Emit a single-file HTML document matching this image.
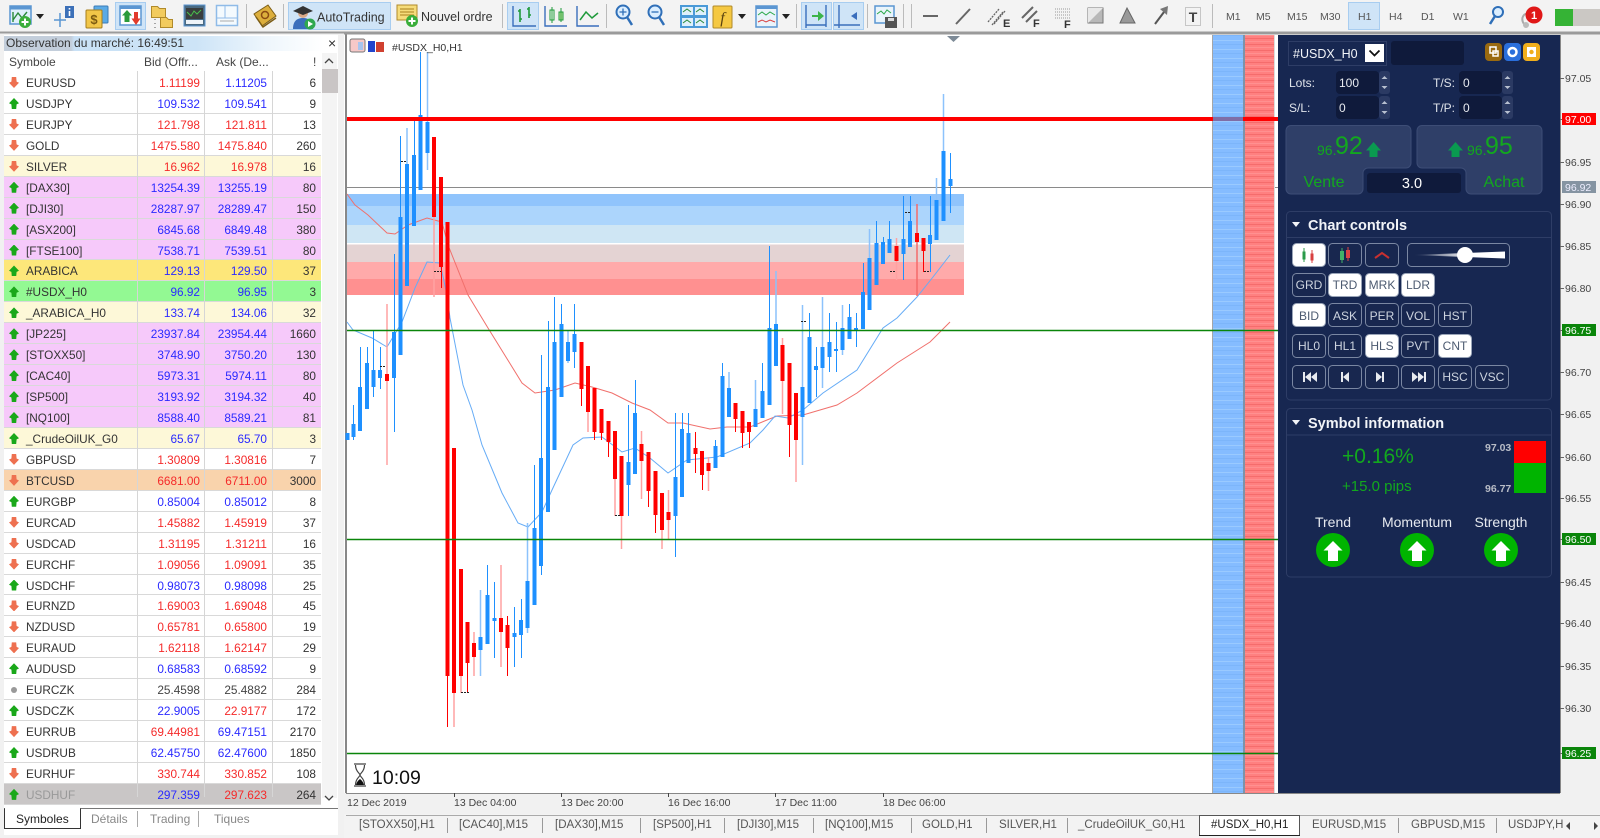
<!DOCTYPE html>
<html><head><meta charset="utf-8"><title>MT4</title>
<style>
html,body{margin:0;padding:0;background:#f1f1f1;width:1600px;height:838px;overflow:hidden;font-family:"Liberation Sans",sans-serif}
svg{position:absolute;left:0;top:0;font-family:"Liberation Sans",sans-serif}
#lp{position:absolute;left:4px;top:35px;width:334px;height:800px;background:#fff}
#ttl{position:absolute;left:4px;top:36px;width:320px;height:15px;background:linear-gradient(90deg,#c3cedb 0,#c3cedb 21%,#c9e1f6 22%,#cde4f7 60%,#eef6fc 82%,#fff 100%);font-size:12px;line-height:15px;color:#333;padding-left:2px;box-sizing:border-box}
#x{position:absolute;left:328px;top:36px;font-size:14px;line-height:15px;color:#333}
.h{position:absolute;top:55px;font-size:12px;line-height:14px;color:#444}
#rows{position:absolute;left:4px;top:72px;width:317px}
.r{position:relative;height:20.95px;border-bottom:1px solid #d9d9d9;box-sizing:border-box;font-size:11.8px;line-height:23px;color:#333;overflow:hidden}
.r i{position:absolute;left:5px;top:5px;width:10px;height:11px}
.r i.u{background:#1aa81a;clip-path:polygon(50% 0,100% 48%,76% 58%,72% 100%,28% 100%,24% 58%,0 48%)}
.r i.d{background:#ee7050;clip-path:polygon(28% 0,72% 0,76% 42%,100% 52%,50% 100%,0 52%,24% 42%)}
.r i.n{background:#999;border-radius:50%;width:6px;height:6px;top:8px;left:7px}
.r span{position:absolute;left:22px}
.r b,.r u{position:absolute;font-weight:normal;text-decoration:none}
.r b.a{right:121px}.r b.c{right:54px}.r u{right:5px}
.bl{color:#2a2aff}.re{color:#f52a2a}.bk{color:#444}
.v{position:absolute;top:71px;width:1px;height:726px;background:#d6d6d6}
.bt{position:absolute;top:812px;font-size:12px;line-height:14px;color:#888}
.tb{position:absolute;top:818px;font-size:11.5px;line-height:14px;color:#555;white-space:nowrap}
.sp{position:absolute;top:818px;width:1px;height:15px;background:#999}
.pa{fill:#444;font-size:10.5px}
.tm{fill:#444;font-size:10.5px}
.tt{fill:#555;font-size:10.5px}
.bd{fill:#18274f;stroke:#7a87a2;stroke-width:1}
.bw{fill:#fff;stroke:#9aa5b8;stroke-width:1}
.btx{font-size:12px;text-anchor:middle;fill:#cdd4df}
.btd{font-size:12px;text-anchor:middle;fill:#4c5a70}
.ipt{fill:#0f1a3b}
.spn{fill:#2b3a63}
.lb{font-size:12px;fill:#dfe3ea}
.val{font-size:12px;fill:#e8ebf0}
.sec{fill:none;stroke:#2e3d66;stroke-width:1}
.hd{font-size:14.5px;font-weight:bold;fill:#f2f4f8}
.gr{fill:#12a81e}
.ind{font-size:14px;fill:#e6e9ef;text-anchor:middle}
</style></head><body>

<div id="lp"></div>
<div id="ttl">Observation du marché: 16:49:51</div>
<div id="x">×</div>
<div class="h" style="left:9px">Symbole</div>
<div class="h" style="left:144px">Bid (Offr...</div>
<div class="h" style="left:216px">Ask (De...</div>
<div class="h" style="left:313px">!</div>

<div id="rows">
<div class="r"><i class="d"></i><span>EURUSD</span><b class="a re">1.11199</b><b class="c bl">1.11205</b><u>6</u></div>
<div class="r"><i class="u"></i><span>USDJPY</span><b class="a bl">109.532</b><b class="c bl">109.541</b><u>9</u></div>
<div class="r"><i class="d"></i><span>EURJPY</span><b class="a re">121.798</b><b class="c re">121.811</b><u>13</u></div>
<div class="r"><i class="d"></i><span>GOLD</span><b class="a re">1475.580</b><b class="c re">1475.840</b><u>260</u></div>
<div class="r" style="background:#fdf8d8"><i class="d"></i><span>SILVER</span><b class="a re">16.962</b><b class="c re">16.978</b><u>16</u></div>
<div class="r" style="background:#f6c9fa"><i class="u"></i><span>[DAX30]</span><b class="a bl">13254.39</b><b class="c bl">13255.19</b><u>80</u></div>
<div class="r" style="background:#f6c9fa"><i class="u"></i><span>[DJI30]</span><b class="a bl">28287.97</b><b class="c bl">28289.47</b><u>150</u></div>
<div class="r" style="background:#f6c9fa"><i class="u"></i><span>[ASX200]</span><b class="a bl">6845.68</b><b class="c bl">6849.48</b><u>380</u></div>
<div class="r" style="background:#f6c9fa"><i class="u"></i><span>[FTSE100]</span><b class="a bl">7538.71</b><b class="c bl">7539.51</b><u>80</u></div>
<div class="r" style="background:#fde77a"><i class="u"></i><span>ARABICA</span><b class="a bl">129.13</b><b class="c bl">129.50</b><u>37</u></div>
<div class="r" style="background:#93f993"><i class="u"></i><span>#USDX_H0</span><b class="a bl">96.92</b><b class="c bl">96.95</b><u>3</u></div>
<div class="r" style="background:#fdf8d8"><i class="u"></i><span>_ARABICA_H0</span><b class="a bl">133.74</b><b class="c bl">134.06</b><u>32</u></div>
<div class="r" style="background:#f6c9fa"><i class="u"></i><span>[JP225]</span><b class="a bl">23937.84</b><b class="c bl">23954.44</b><u>1660</u></div>
<div class="r" style="background:#f6c9fa"><i class="u"></i><span>[STOXX50]</span><b class="a bl">3748.90</b><b class="c bl">3750.20</b><u>130</u></div>
<div class="r" style="background:#f6c9fa"><i class="u"></i><span>[CAC40]</span><b class="a bl">5973.31</b><b class="c bl">5974.11</b><u>80</u></div>
<div class="r" style="background:#f6c9fa"><i class="u"></i><span>[SP500]</span><b class="a bl">3193.92</b><b class="c bl">3194.32</b><u>40</u></div>
<div class="r" style="background:#f6c9fa"><i class="u"></i><span>[NQ100]</span><b class="a bl">8588.40</b><b class="c bl">8589.21</b><u>81</u></div>
<div class="r" style="background:#fdf8d8"><i class="u"></i><span>_CrudeOilUK_G0</span><b class="a bl">65.67</b><b class="c bl">65.70</b><u>3</u></div>
<div class="r"><i class="d"></i><span>GBPUSD</span><b class="a re">1.30809</b><b class="c re">1.30816</b><u>7</u></div>
<div class="r" style="background:#f9d3ac"><i class="d"></i><span>BTCUSD</span><b class="a re">6681.00</b><b class="c re">6711.00</b><u>3000</u></div>
<div class="r"><i class="u"></i><span>EURGBP</span><b class="a bl">0.85004</b><b class="c bl">0.85012</b><u>8</u></div>
<div class="r"><i class="d"></i><span>EURCAD</span><b class="a re">1.45882</b><b class="c re">1.45919</b><u>37</u></div>
<div class="r"><i class="d"></i><span>USDCAD</span><b class="a re">1.31195</b><b class="c re">1.31211</b><u>16</u></div>
<div class="r"><i class="d"></i><span>EURCHF</span><b class="a re">1.09056</b><b class="c re">1.09091</b><u>35</u></div>
<div class="r"><i class="u"></i><span>USDCHF</span><b class="a bl">0.98073</b><b class="c bl">0.98098</b><u>25</u></div>
<div class="r"><i class="d"></i><span>EURNZD</span><b class="a re">1.69003</b><b class="c re">1.69048</b><u>45</u></div>
<div class="r"><i class="d"></i><span>NZDUSD</span><b class="a re">0.65781</b><b class="c re">0.65800</b><u>19</u></div>
<div class="r"><i class="d"></i><span>EURAUD</span><b class="a re">1.62118</b><b class="c re">1.62147</b><u>29</u></div>
<div class="r"><i class="u"></i><span>AUDUSD</span><b class="a bl">0.68583</b><b class="c bl">0.68592</b><u>9</u></div>
<div class="r"><i class="n"></i><span>EURCZK</span><b class="a bk">25.4598</b><b class="c bk">25.4882</b><u>284</u></div>
<div class="r"><i class="u"></i><span>USDCZK</span><b class="a bl">22.9005</b><b class="c re">22.9177</b><u>172</u></div>
<div class="r"><i class="d"></i><span>EURRUB</span><b class="a re">69.44981</b><b class="c bl">69.47151</b><u>2170</u></div>
<div class="r"><i class="u"></i><span>USDRUB</span><b class="a bl">62.45750</b><b class="c bl">62.47600</b><u>1850</u></div>
<div class="r"><i class="d"></i><span>EURHUF</span><b class="a re">330.744</b><b class="c re">330.852</b><u>108</u></div>
<div class="r" style="background:#c9c6c6"><i class="u"></i><span style="color:#999">USDHUF</span><b class="a bl">297.359</b><b class="c re">297.623</b><u>264</u></div>
</div>
<div class="v" style="left:137px"></div><div class="v" style="left:204px"></div><div class="v" style="left:272px"></div>

<div class="bt" style="left:91px">Détails</div>
<div class="bt" style="left:150px">Trading</div>
<div class="bt" style="left:214px">Tiques</div>

<svg width="1600" height="838" viewBox="0 0 1600 838" xmlns="http://www.w3.org/2000/svg">
<!-- left panel chrome -->
<rect x="322" y="53" width="15" height="745" fill="#f4f4f4"/>
<rect x="322" y="69" width="16" height="24" fill="#c9c5c5"/>
<path d="M325 63l4-4 4 4M325 796l4 4 4-4" fill="none" stroke="#444" stroke-width="1.300"/>
<path d="M4 808.500H338" stroke="#777"/>
<path d="M137.500 811V827M198.500 811V827" stroke="#aaa"/>
<path d="M4.500 808.500V828.500H80.500V808.500" fill="#fff" stroke="#333"/>
<path d="M5 809H80" stroke="#fff" stroke-width="2"/>
<text x="16" y="823" font-size="12" fill="#222">Symboles</text>

<!-- chart area -->
<rect x="344" y="34" width="1216" height="759" fill="#fff"/>
<path d="M346 34V793" stroke="#888" stroke-width="2"/>
<path d="M344 34H1600" stroke="#999" stroke-width="1"/>
<path d="M346 793.500H1560" stroke="#888"/>
<!-- zones -->
<rect x="347" y="194" width="617" height="12" fill="#90c4fc"/>
<rect x="347" y="206" width="617" height="19" fill="#acd5fc"/>
<rect x="347" y="225" width="617" height="18" fill="#cfe6f4"/>
<rect x="347" y="244.500" width="617" height="17.500" fill="#e4d3d3"/>
<rect x="347" y="262" width="617" height="17" fill="#ffaaaa"/>
<rect x="347" y="279" width="617" height="16" fill="#ff9090"/>
<!-- horizontal -->
<path d="M347 187.500H1278" stroke="#8a8a8a"/>
<!-- indicators -->
<path fill="none" stroke="#f0706c" stroke-width="1" d="M347 194L355 205L368 215L387 233L395 234L408 225L427 218L442 222L448 245L468 295L488 328L522 383L535 393L555 390L575 383L592 387L612 393L632 403L650 410L668 423L683 423L710 429L727 427L750 427L767 420L777 416L803 415L837 405L857 393L897 363L930 342L950 322"/>
<path fill="none" stroke="#66acf6" stroke-width="1" d="M347 322L353 330L372 338L387 347L402 322L415 288L427 262L440 263L447 295L450 318L463 385L472 410L482 445L502 493L518 523L528 527L542 512L552 490L573 445L583 438L602 437L622 452L635 448L650 458L668 473L687 460L717 457L750 443L763 430L775 416L788 418L803 410L823 393L857 370L883 328L897 318L917 297L933 277L950 255"/>
<!-- wicks -->
<path fill="none" stroke="#1e90ff" stroke-width="1" d="M353.500 405V440M360.500 347V431M367.500 347V409M373.500 330V397M380.500 347V389M394.500 254V432M400.500 136V355M414.500 121V226M420.500 52V190M487.500 565V644M494.500 582V658M514.500 607V667M521.500 599V658M534.500 465V605M541.500 355V575M548.500 321V512M554.500 297V450M561.500 304V397M574.500 304V368M628.500 405V516M635.500 380V474M675.500 413V557M682.500 413V497M688.500 413V463M715.500 440V468M722.500 363V457M762.500 363V418M769.500 246V405M809.500 313V403M816.500 347V397M829.500 313V372M836.500 322V372M849.500 304V339M856.500 313V347M863.500 263V329M876.500 221V285M883.500 237V264M889.500 221V253M903.500 196V280M910.500 196V247M930.500 196V272M950.500 153V213"/>
<path fill="none" stroke="#8cc2fc" stroke-width="1.500" d="M407 128V286M427.500 52V170M480.500 590V676M527.500 523V633M568 330V363M729 372V417M755.500 380V427M776 271V366M802.500 305V465M822.500 297V388M842.500 305V355M869.500 229V310M936.500 178V240M943.500 94V221"/>
<path fill="none" stroke="#f00" stroke-width="1" d="M441.500 177V288M447.500 222V727M467.500 622V693M507.500 616V676M581.500 342V406M594.500 388V440M601.500 409V440M608.500 421V457M648.500 452V507M655.500 471V533M695.500 432V473M702.500 451V490M735.500 403V432M742.500 411V448M749.500 422V448M789.500 363V457M923.500 238V272"/>
<path fill="none" stroke="#ffa2a2" stroke-width="1.500" d="M387 304V465M434 137V297M454 448V727M461 569V693M474 632V676M501 565V667M588 366V432M615 431V516M621.500 456V549M641.500 431V499M662 493V549M668.500 490V540M708.500 457V491M782.500 338V414M796 393V482M896.500 238V280"/>
<path fill="none" stroke="#f46a6a" stroke-width="1.500" d="M917 204V296"/>
<!-- bodies -->
<path fill="none" stroke="#1e90ff" stroke-width="4" d="M347.500 433V440M353.500 424V437M360 387V431M367 363V409M373.500 370V387M380 370V378M394 332V378M400.500 217V355M407 164V286M414 155V226M420.500 115V190M427.500 122V153M480.500 637V650M487.500 595V644M494.500 618V621M514.500 633V637M521 620V635M527.500 581V628M534.500 528V605M541 458V566M548 387V512M554.500 342V450M561.500 324V397M568 342V361M574.500 334V352M628.500 462V485M635 413V474M675.500 477V516M682 429V497M688.500 433V463M715.500 446V468M722.500 376V457M729 388V417M755.500 409V427M762.500 391V418M769.500 328V405M776 324V366M802.500 387V417M809.500 337V403M816 366V370M822.500 347V368M829.500 342V357M836 349V351M842.500 328V350M849.500 317V339M856 328V330M863 292V329M869.500 258V310M876.500 243V285M883 242V264M889.500 239V253M903.500 239V254M910 221V247M930 235V244M936.500 200V240M943.500 151V221M950.500 179V186"/>
<path fill="none" stroke="#f00" stroke-width="4" d="M387 374V381M434 137V217M441 177V267M447.500 222V676M454 448V693M461 569V676M467.500 622V663M474 643V657M501 618V632M507.500 625V648M581.500 342V389M588 366V412M594.500 388V432M601.500 409V433M608.500 421V442M615 431V479M621.500 456V516M641.500 444V461M648.500 452V491M655.500 471V515M662 493V530M668.500 512V520M695.500 448V454M702 451V475M708.500 463V471M735.500 403V419M742.500 411V433M749 422V432M782.500 345V381M789.500 363V425M796 393V440M896.500 246V261M917 233V242M923.500 238V251"/>
<!-- tiny dashes -->
<path fill="none" stroke="#222" stroke-width="1" stroke-dasharray="2 1" d="M401 161.500h6M434 271.500h7M380 366.500h6M461 692.500h8M615 515.500h5M662 539.500h6M801 321.500h6M905 212.500h5M924 271.500h6M890 271.500h6"/>
<!-- side bars -->
<defs>
<pattern id="pb" width="6" height="9" patternUnits="userSpaceOnUse"><rect width="6" height="9" fill="#85bcff"/><rect y="4" width="6" height="1" fill="#9acaff"/><rect y="8" width="6" height="1" fill="#7cb5fa"/></pattern>
<pattern id="pr" width="6" height="6" patternUnits="userSpaceOnUse"><rect width="6" height="6" fill="#ff8080"/><rect y="2" width="6" height="1" fill="#f56c6c"/><rect y="5" width="6" height="1" fill="#ff9090"/></pattern>
</defs>
<rect x="1213" y="35" width="30" height="758" fill="url(#pb)"/>
<rect x="1245" y="35" width="29" height="758" fill="url(#pr)"/>
<path d="M1212.500 35V793" stroke="#a6a6a6"/><path d="M1244 35V793" stroke="#7f93a8" stroke-width="2"/><path d="M1274.500 35V793" stroke="#ddd"/>
<!-- levels -->
<path d="M347 119H1278" stroke="#f00" stroke-width="4"/>
<rect x="1213" y="117" width="30" height="4" fill="#7f6ea6"/>
<path d="M347 330.500H1278M347 539.500H1278M347 753.500H1278" stroke="#0a850a" stroke-width="1.400"/>
<path d="M947 36h13l-6.500 6z" fill="#7d8a96"/>

<!-- chart label/icons -->
<rect x="350" y="39" width="15" height="13" rx="2" fill="#f6c8c8" stroke="#777"/>
<rect x="358" y="42" width="5" height="8" fill="#a8c4ee"/>
<rect x="368" y="41" width="7" height="11" fill="#2244cc"/>
<rect x="376" y="42" width="8" height="10" fill="#d04030"/>
<text x="392" y="51" font-size="10.500" fill="#333">#USDX_H0,H1</text>

<!-- hourglass -->
<path d="M354 764H366M354 786H366M355.500 765C355.500 772 360 773 360 775C360 777 355.500 778 355.500 785M364.500 765C364.500 772 360 773 360 775C360 777 364.500 778 364.500 785" fill="none" stroke="#444" stroke-width="1.200"/>
<path d="M356 785C357 781 359 780 360 779C361 780 363 781 364 785Z" fill="#111"/>
<text x="372" y="784" font-size="19.500" fill="#111">10:09</text>

<!-- time axis -->
<g stroke="#444"><path d="M454.500 793V797M561.500 793V797M668.500 793V797M775.500 793V797M883.500 793V797"/></g>
<text class="tm" x="347" y="806">12 Dec 2019</text><text class="tm" x="454" y="806">13 Dec 04:00</text><text class="tm" x="561" y="806">13 Dec 20:00</text><text class="tm" x="668" y="806">16 Dec 16:00</text><text class="tm" x="775" y="806">17 Dec 11:00</text><text class="tm" x="883" y="806">18 Dec 06:00</text>

<!-- price axis -->
<path d="M1560.500 35V793" stroke="#888"/>
<path stroke="#666" d="M1560 78.500h4M1560 119.500h4M1560 162.500h4M1560 204.500h4M1560 246.500h4M1560 288.500h4M1560 330.500h4M1560 372.500h4M1560 414.500h4M1560 457.500h4M1560 498.500h4M1560 539.500h4M1560 582.500h4M1560 623.500h4M1560 666.500h4M1560 708.500h4M1560 753.500h4"/>
<g class="pa">
<text class="pa" x="1565" y="82">97.05</text><text class="pa" x="1565" y="166">96.95</text><text class="pa" x="1565" y="208">96.90</text><text class="pa" x="1565" y="250">96.85</text><text class="pa" x="1565" y="292">96.80</text><text class="pa" x="1565" y="376">96.70</text><text class="pa" x="1565" y="418">96.65</text><text class="pa" x="1565" y="461">96.60</text><text class="pa" x="1565" y="502">96.55</text><text class="pa" x="1565" y="586">96.45</text><text class="pa" x="1565" y="627">96.40</text><text class="pa" x="1565" y="670">96.35</text><text class="pa" x="1565" y="712">96.30</text>
</g>
<rect x="1562" y="113" width="34" height="12" fill="#f00"/><text x="1565" y="123" font-size="10.500" fill="#fff">97.00</text>
<rect x="1562" y="181" width="34" height="12" fill="#8594a2"/><text x="1565" y="191" font-size="10.500" fill="#eef">96.92</text>
<rect x="1562" y="324" width="34" height="12" fill="#0a850a"/><text x="1565" y="334" font-size="10.500" fill="#fff">96.75</text>
<rect x="1562" y="533" width="34" height="12" fill="#0a850a"/><text x="1565" y="543" font-size="10.500" fill="#fff">96.50</text>
<rect x="1562" y="747" width="34" height="12" fill="#0a850a"/><text x="1565" y="757" font-size="10.500" fill="#fff">96.25</text>

<!-- PANEL -->
<rect x="1278" y="35" width="282" height="758" fill="#172751"/>
<rect x="1288.500" y="41.500" width="98" height="24" fill="none" stroke="#2e3d66"/>
<text x="1293" y="58" font-size="12.500" fill="#f2f4f8">#USDX_H0</text>
<rect x="1365" y="44" width="19" height="18" fill="#fff"/>
<path d="M1369.500 50.500l5 5 5-5" fill="none" stroke="#111" stroke-width="1.800"/>
<rect x="1391" y="41" width="73" height="24" rx="3" class="ipt"/>
<rect x="1485" y="43" width="17" height="18" rx="4" fill="#9a6a10"/><rect x="1490" y="47" width="6" height="6" fill="none" stroke="#fff" stroke-width="1.500"/><rect x="1493" y="51" width="5" height="5" fill="none" stroke="#fff" stroke-width="1.500"/>
<rect x="1504" y="43" width="17" height="18" rx="4" fill="#2a6fdc"/><circle cx="1512.500" cy="52" r="4" fill="none" stroke="#fff" stroke-width="2.500"/>
<rect x="1523" y="43" width="17" height="18" rx="4" fill="#f0ae1c"/><path d="M1527 47h9v10h-9z" fill="#fff"/><circle cx="1531.500" cy="52" r="2.200" fill="#f0ae1c"/>

<text class="lb" x="1289" y="87">Lots:</text><text class="lb" x="1433" y="87">T/S:</text><text class="lb" x="1289" y="112">S/L:</text><text class="lb" x="1433" y="112">T/P:</text>
<rect x="1336" y="71" width="43" height="23" rx="4" class="ipt"/><rect x="1459" y="71" width="43" height="23" rx="4" class="ipt"/><rect x="1336" y="96" width="43" height="23" rx="4" class="ipt"/><rect x="1459" y="96" width="43" height="23" rx="4" class="ipt"/>
<rect x="1379" y="71" width="11" height="23" rx="3" class="spn"/><rect x="1502" y="71" width="11" height="23" rx="3" class="spn"/><rect x="1379" y="96" width="11" height="23" rx="3" class="spn"/><rect x="1502" y="96" width="11" height="23" rx="3" class="spn"/>
<path fill="#b8c0d0" d="M1381.500 79l3-3 3 3zM1381.500 86l3 3 3-3zM1504.500 79l3-3 3 3zM1504.500 86l3 3 3-3zM1381.500 104l3-3 3 3zM1381.500 111l3 3 3-3zM1504.500 104l3-3 3 3zM1504.500 111l3 3 3-3z"/>
<text class="val" x="1339" y="87">100</text><text class="val" x="1463" y="87">0</text><text class="val" x="1339" y="112">0</text><text class="val" x="1463" y="112">0</text>

<path d="M1291 125.500H1406a5 5 0 0 1 5 5V163a5 5 0 0 1-5 5H1368a5 5 0 0 0-5 5V189a5 5 0 0 1-5 5H1291a5 5 0 0 1-5-5V130.500a5 5 0 0 1 5-5Z" fill="#2f3f68" stroke="#3d4d76"/>
<path d="M1422 125.500H1537a5 5 0 0 1 5 5V189a5 5 0 0 1-5 5H1471a5 5 0 0 1-5-5V173a5 5 0 0 0-5-5H1422a5 5 0 0 1-5-5V130.500a5 5 0 0 1 5-5Z" fill="#2f3f68" stroke="#3d4d76"/>
<text class="gr" x="1317" y="155" font-size="14">96.</text><text class="gr" x="1335" y="154" font-size="25">92</text>
<path fill="#0a9a50" d="M1373.500 142l7.500 8.500h-3.500V157h-8v-6.500H1366z"/>
<path fill="#0a9a50" d="M1455.500 142l7.500 8.500h-3.500V157h-8v-6.500H1448z"/>
<text class="gr" x="1467" y="155" font-size="14">96.</text><text class="gr" x="1485" y="154" font-size="25">95</text>
<text class="gr" x="1324" y="187" font-size="16" text-anchor="middle">Vente</text>
<text class="gr" x="1504" y="187" font-size="16" text-anchor="middle">Achat</text>
<rect x="1367" y="173" width="94" height="20" rx="3" class="ipt"/>
<text x="1412" y="188" font-size="14.500" fill="#fff" text-anchor="middle">3.0</text>

<rect class="sec" x="1286.500" y="211.500" width="265" height="188.500" rx="4"/><path d="M1287 237.500H1551" stroke="#2e3d66"/>
<path d="M1292 222h8l-4 5z" fill="#f2f4f8"/>
<text class="hd" x="1308" y="230">Chart controls</text>

<rect class="bw" x="1292.500" y="243.500" width="33" height="23" rx="4"/>
<path d="M1304 248V262M1303 252h2v7h-2z" stroke="#2a9a4a" fill="#2a9a4a"/><path d="M1312 250V263M1311 254h2v6h-2z" stroke="#d84040" fill="#d84040"/>
<rect class="bd" x="1328.500" y="243.500" width="33" height="23" rx="4"/>
<rect x="1340" y="251" width="4" height="9" fill="#42b268"/><path d="M1342 248V263" stroke="#42b268"/><rect x="1346" y="250" width="4" height="8" fill="#d44"/><path d="M1348 247V261" stroke="#d44"/>
<rect class="bd" x="1365.500" y="243.500" width="33" height="23" rx="4"/>
<path d="M1375 258l7-5 7 5" fill="none" stroke="#c83030" stroke-width="2"/>
<rect class="bd" x="1407.500" y="243.500" width="102" height="23" rx="4"/>
<defs><linearGradient id="sl"><stop offset="0" stop-color="#fff" stop-opacity="0"/><stop offset=".6" stop-color="#fff"/></linearGradient></defs>
<path d="M1413 255L1505 251.500V258.500Z" fill="url(#sl)"/>
<circle cx="1465" cy="255" r="8" fill="#fff"/>

<rect class="bd" x="1292.500" y="273.500" width="33" height="23" rx="4"/><text class="btx" x="1309" y="289">GRD</text>
<rect class="bw" x="1328.500" y="273.500" width="33" height="23" rx="4"/><text class="btd" x="1345" y="289">TRD</text>
<rect class="bw" x="1365.500" y="273.500" width="33" height="23" rx="4"/><text class="btd" x="1382" y="289">MRK</text>
<rect class="bw" x="1401.500" y="273.500" width="33" height="23" rx="4"/><text class="btd" x="1418" y="289">LDR</text>

<rect class="bw" x="1292.500" y="303.500" width="33" height="23" rx="4"/><text class="btd" x="1309" y="320">BID</text>
<rect class="bd" x="1328.500" y="303.500" width="33" height="23" rx="4"/><text class="btx" x="1345" y="320">ASK</text>
<rect class="bd" x="1365.500" y="303.500" width="33" height="23" rx="4"/><text class="btx" x="1382" y="320">PER</text>
<rect class="bd" x="1401.500" y="303.500" width="33" height="23" rx="4"/><text class="btx" x="1418" y="320">VOL</text>
<rect class="bd" x="1438.500" y="303.500" width="33" height="23" rx="4"/><text class="btx" x="1455" y="320">HST</text>

<rect class="bd" x="1292.500" y="334.500" width="33" height="23" rx="4"/><text class="btx" x="1309" y="350">HL0</text>
<rect class="bd" x="1328.500" y="334.500" width="33" height="23" rx="4"/><text class="btx" x="1345" y="350">HL1</text>
<rect class="bw" x="1365.500" y="334.500" width="33" height="23" rx="4"/><text class="btd" x="1382" y="350">HLS</text>
<rect class="bd" x="1401.500" y="334.500" width="33" height="23" rx="4"/><text class="btx" x="1418" y="350">PVT</text>
<rect class="bw" x="1438.500" y="334.500" width="33" height="23" rx="4"/><text class="btd" x="1455" y="350">CNT</text>

<rect class="bd" x="1292.500" y="365.500" width="33" height="23" rx="4"/><path fill="#e8ebf0" d="M1303 372h2v10h-2zM1311 372v10l-6-5zM1317 372v10l-6-5z"/>
<rect class="bd" x="1328.500" y="365.500" width="33" height="23" rx="4"/><path fill="#e8ebf0" d="M1341 372h2v10h-2zM1349 372v10l-6-5z"/>
<rect class="bd" x="1365.500" y="365.500" width="33" height="23" rx="4"/><path fill="#e8ebf0" d="M1376 372v10l6-5zM1382 372h2v10h-2z"/>
<rect class="bd" x="1401.500" y="365.500" width="33" height="23" rx="4"/><path fill="#e8ebf0" d="M1412 372v10l6-5zM1418 372v10l6-5zM1424 372h2v10h-2z"/>
<rect class="bd" x="1438.500" y="365.500" width="33" height="23" rx="4"/><text class="btx" x="1455" y="381">HSC</text>
<rect class="bd" x="1475.500" y="365.500" width="33" height="23" rx="4"/><text class="btx" x="1492" y="381">VSC</text>

<rect class="sec" x="1286.500" y="408.500" width="265" height="168.500" rx="4"/><path d="M1287 435H1551" stroke="#2e3d66"/>
<path d="M1292 420h8l-4 5z" fill="#f2f4f8"/>
<text class="hd" x="1308" y="428">Symbol information</text>
<text x="1342" y="463" font-size="21" class="gr">+0.16%</text>
<text x="1342" y="491" font-size="15" class="gr">+15.0 pips</text>
<text x="1485" y="451" font-size="10.500" font-weight="bold" fill="#b8bcc6">97.03</text>
<text x="1485" y="492" font-size="10.500" font-weight="bold" fill="#b8bcc6">96.77</text>
<rect x="1514" y="441" width="32" height="22" fill="#f00"/><rect x="1514" y="463" width="32" height="30" fill="#00b400"/>
<text class="ind" x="1333" y="527">Trend</text><text class="ind" x="1417" y="527">Momentum</text><text class="ind" x="1501" y="527">Strength</text>
<circle cx="1333" cy="550" r="17" fill="#00b400"/><circle cx="1417" cy="550" r="17" fill="#00b400"/><circle cx="1501" cy="550" r="17" fill="#00b400"/>
<path fill="#fff" d="M1333 541l9.500 9.500h-4.500v10.500h-10v-10.500h-4.500zM1417 541l9.500 9.500h-4.500v10.500h-10v-10.500h-4.500zM1501 541l9.500 9.500h-4.500v10.500h-10v-10.500h-4.500z"/>

<!-- chart tabs bar -->
<rect x="344" y="814" width="1256" height="24" fill="#f3f3f3"/>
<path d="M346 815.500H1600" stroke="#aaa"/>
<path d="M1199.500 836V815.500H1299.500V836" fill="#fff" stroke="#555"/>
<rect x="1200" y="816" width="99" height="19" fill="#fff"/><path d="M1199 835.500H1300" stroke="#222"/>
<path d="M1570 822v8l-4-4zM1594 822v8l4-4z" fill="#444"/>

<!-- TOOLBAR -->
<rect x="0" y="0" width="1600" height="32" fill="#f3f3f3"/>
<path d="M0 32.500H1600" stroke="#9b9b9b" stroke-width="2"/>
<g fill="#cfe4f7" stroke="#a8cdf0"><rect x="115.500" y="2.500" width="30" height="27"/><rect x="288.500" y="2.500" width="102" height="27"/><rect x="507.500" y="2.500" width="31" height="27"/><rect x="801.500" y="2.500" width="30" height="27"/><rect x="833.500" y="2.500" width="30" height="27"/><rect x="1348.500" y="2.500" width="31" height="27"/></g>
<path stroke="#bbb" d="M246.500 4V28M283.500 4V28M502.500 4V28M606.500 4V28M796.500 4V28M867.500 4V28M903.500 4V28M911.500 4V28M1212.500 4V28"/>
<!-- new chart -->
<rect x="10" y="6" width="21" height="18" fill="#dff0fb" stroke="#5b96d2" stroke-width="1.500"/><rect x="10" y="6" width="21" height="3.500" fill="#5b96d2"/>
<path d="M13 22V12M13 20L18 13L22 18L27 12" fill="none" stroke="#2a8a3a" stroke-width="1.400"/>
<circle cx="25" cy="22" r="6" fill="#3aae3a"/><path d="M25 18.500v7M21.500 22h7" stroke="#fff" stroke-width="2"/>
<path d="M36 14h8l-4 5z" fill="#222"/>
<!-- info -->
<path d="M60 13V27M54 20H66" stroke="#5b96d2" stroke-width="1.500"/><rect x="65" y="6" width="9" height="12" fill="#3c70b8"/><path d="M69.500 8v1.500M69.500 11v5" stroke="#fff" stroke-width="1.600"/>
<!-- dollar -->
<rect x="94" y="6" width="14" height="17" rx="1" fill="#5aaae6" stroke="#3b7bb5"/><rect x="86" y="10" width="16" height="18" rx="1" fill="#f2c648" stroke="#a77f1c"/>
<text x="94" y="24" font-size="13" font-weight="bold" text-anchor="middle" fill="#7c5a10">$</text>
<!-- market watch -->
<rect x="120" y="6" width="21" height="19" fill="#fff" stroke="#5b96d2" stroke-width="1.500"/><rect x="120" y="6" width="21" height="3" fill="#5b96d2"/>
<path fill="#2a9a3a" d="M127 10l5 5.500h-2.500V22h-5v-6.500H122z"/><path fill="#e23b2b" d="M134 12h4v6.500h2.500L136 25l-4.500-6.500H134z"/>
<!-- folders -->
<path fill="#f2cb5e" stroke="#b08a2a" d="M151.500 6.500h6l2 2h6v9h-14zM160.500 17.500h6l2 2h4v8h-12z"/><path d="M155 19v1M155 23v1M155 27v1" stroke="#555"/>
<!-- chart dark -->
<rect x="184" y="5" width="21" height="21" fill="#4a6a82" stroke="#5b96d2"/><rect x="186" y="8" width="17" height="11" fill="#3a3e3e"/><path d="M187 12l4 4 3-5 3 3 4-4" stroke="#49c04c" fill="none"/><rect x="186" y="20" width="17" height="4" fill="#eef3f8"/>
<!-- panel -->
<rect x="216.500" y="5.500" width="21" height="20" fill="#f4fafe" stroke="#8fbbe8" stroke-width="1.500"/><path d="M225 6V18M217 18H237" stroke="#8fbbe8"/><path d="M220 21h14" stroke="#aaa"/>
<!-- book -->
<path fill="#dcae3c" stroke="#7c5d16" d="M254 14L268 5L276 16L262 26Z"/><path d="M256 17L263 27L276 18" stroke="#7c5d16" fill="none" stroke-width="1.500"/><circle cx="265" cy="15" r="3.500" fill="none" stroke="#8a4a12" stroke-width="1.500"/>
<!-- autotrading -->
<circle cx="303" cy="13" r="5" fill="#d9a887"/><path d="M293 11l10-5 10 5-10 4z" fill="#333"/><path d="M293 29c0-8 4-11 10-11s10 3 10 11z" fill="#3a6ebc"/><circle cx="310" cy="24" r="5.500" fill="#2fa84f"/><path d="M308 21l5 3-5 3z" fill="#fff"/>
<text x="317" y="21.500" font-size="12.500" fill="#333">AutoTrading</text>
<!-- nouvel ordre -->
<rect x="397" y="5" width="20" height="15" fill="#f6dc7a" stroke="#b08a2a"/><path d="M400 9h14M400 12h14M400 15h14" stroke="#a8811e"/><circle cx="412" cy="21" r="6" fill="#3aae3a"/><path d="M412 17.500v7M408.500 21h7" stroke="#fff" stroke-width="2"/>
<text x="421" y="21" font-size="12.500" fill="#333">Nouvel ordre</text>
<!-- chart type -->
<path d="M513 6V26H536" stroke="#3a6ebc" fill="none" stroke-width="1.400"/><path d="M520 9V22M518 11h2M520 19h2M529 7V18M527 9h2M529 15h2" stroke="#1e9a3a" fill="none" stroke-width="1.600"/>
<path d="M545 6V26H567" stroke="#3a6ebc" fill="none" stroke-width="1.400"/><rect x="550" y="10" width="4" height="10" fill="#fff" stroke="#1e9a3a"/><path d="M552 7V23" stroke="#1e9a3a"/><rect x="559" y="12" width="4" height="8" fill="#c8e8a0" stroke="#1e9a3a"/><path d="M561 8V22" stroke="#1e9a3a"/>
<path d="M577 6V26H599" stroke="#3a6ebc" fill="none" stroke-width="1.400"/><path d="M580 20L586 12L592 18L598 13" stroke="#1e9a3a" fill="none" stroke-width="1.500"/>
<!-- zoom -->
<circle cx="623" cy="12" r="6.500" fill="#dbeeff" stroke="#2f6fb8" stroke-width="2"/><path d="M627 17l5 8" stroke="#2f6fb8" stroke-width="2.500"/><path d="M619.500 12h7M623 8.500v7" stroke="#2f6fb8" stroke-width="1.300"/>
<circle cx="655" cy="12" r="6.500" fill="#dbeeff" stroke="#2f6fb8" stroke-width="2"/><path d="M659 17l5 8" stroke="#2f6fb8" stroke-width="2.500"/><path d="M651.500 12h7" stroke="#2f6fb8" stroke-width="1.300"/>
<!-- tile -->
<rect x="680" y="5" width="28" height="23" fill="#4a9ad8"/><g fill="#dff0fb"><rect x="682" y="7" width="11" height="8"/><rect x="695" y="7" width="11" height="8"/><rect x="682" y="18" width="11" height="8"/><rect x="695" y="18" width="11" height="8"/></g><path d="M683 12l4-3 4 3M696 12l4-3 4 3M683 23l4-3 4 3M696 23l4-3 4 3" stroke="#2a8a3a" fill="none"/>
<!-- f -->
<rect x="713" y="6" width="19" height="22" rx="1" fill="#f5c842" stroke="#b08a2a"/><text x="722.500" y="23" font-size="16" font-style="italic" font-family="Liberation Serif,serif" text-anchor="middle" fill="#5a4210">f</text>
<path d="M738 14h8l-4 5z" fill="#222"/>
<!-- indicators -->
<rect x="756" y="6" width="21" height="21" fill="#eaf4fb" stroke="#5b96d2" stroke-width="1.500"/><rect x="756" y="6" width="21" height="3" fill="#5b96d2"/><path d="M758 15l4-3 4 3 4-3 5 3" stroke="#2aa84a" fill="none"/><path d="M758 22l4-2 4 2 4-2 5 2" stroke="#d84040" fill="none"/>
<path d="M782 14h8l-4 5z" fill="#222"/>
<!-- shift/autoscroll -->
<path d="M806 5V28M806 25H826M826 5V27" stroke="#3a6ebc" fill="none" stroke-width="1.400"/><path d="M812 15h6v-4l6 5-6 5v-4h-6z" fill="#3cb44a"/>
<path d="M839 5V28M834 25H860" stroke="#3a6ebc" fill="none" stroke-width="1.400"/><path d="M857 12v8l-6-4z" fill="#3a6ebc"/>
<!-- template -->
<rect x="875" y="6" width="19" height="17" fill="#eaf4fb" stroke="#5b96d2" stroke-width="1.500"/><path d="M877 14l4-3 3 3 3-4 4 3" stroke="#2aa84a" fill="none"/><rect x="885" y="17" width="12" height="11" fill="#555"/><rect x="888" y="18" width="6" height="3" fill="#ddd"/>
<!-- drawing -->
<path d="M923 16H938" stroke="#666" stroke-width="2"/>
<path d="M956 24L970 9" stroke="#666" stroke-width="2"/>
<path d="M988 22L999 9M992 25L1003 12M994 24L1005 11" stroke="#666" stroke-width="1.300" stroke-dasharray="2 1"/><text x="1003" y="27" font-size="11" font-weight="bold" fill="#333">E</text>
<path d="M1022 18L1033 7M1026 22L1037 11" stroke="#666" stroke-width="2"/><text x="1033" y="27" font-size="11" font-weight="bold" fill="#333">F</text>
<path d="M1055 9H1070M1055 12H1070M1055 15H1070M1055 18H1070" stroke="#999" stroke-dasharray="1 1"/><text x="1064" y="28" font-size="11" font-weight="bold" fill="#333">F</text>
<rect x="1088" y="8" width="15" height="15" fill="#b8b8b8" stroke="#777"/><path d="M1088 8L1103 8L1088 23Z" fill="#e8e8e8"/>
<path d="M1127 8L1135 23H1120Z" fill="#999" stroke="#666"/>
<path d="M1155 24L1164 12" stroke="#555" stroke-width="2"/><path d="M1168 6l-1 9-7-6z" fill="#777"/>
<rect x="1185.500" y="7.500" width="15" height="18" fill="none" stroke="#999" stroke-dasharray="1 1"/><text x="1193" y="22" font-size="14" font-weight="bold" text-anchor="middle" fill="#444">T</text>
<!-- timeframes -->
<text class="tt" x="1226" y="20">M1</text>
<text class="tt" x="1256" y="20">M5</text><text class="tt" x="1287" y="20">M15</text><text class="tt" x="1320" y="20">M30</text><text class="tt" x="1358" y="20">H1</text><text class="tt" x="1389" y="20">H4</text><text class="tt" x="1421" y="20">D1</text><text class="tt" x="1453" y="20">W1</text>
<circle cx="1498" cy="12" r="5" fill="#dbeeff" stroke="#2f6fb8" stroke-width="2"/><path d="M1495 16l-5 8" stroke="#2f6fb8" stroke-width="2.500"/>
<path d="M1524 24c-4-6 0-12 6-10" fill="none" stroke="#aaa" stroke-width="2"/><circle cx="1526" cy="25" r="3" fill="#bbb"/>
<circle cx="1534" cy="15" r="8.500" fill="#e01818"/><text x="1534" y="19" font-size="11" font-weight="bold" text-anchor="middle" fill="#fff">1</text>
<rect x="1555" y="9" width="18" height="17" fill="#35b335"/><rect x="1573" y="9" width="27" height="17" fill="#cbc8c4"/>
</svg>

<div class="tb" style="left:359px">[STOXX50],H1</div><div class="sp" style="left:447px"></div>
<div class="tb" style="left:459px">[CAC40],M15</div><div class="sp" style="left:542px"></div>
<div class="tb" style="left:555px">[DAX30],M15</div><div class="sp" style="left:640px"></div>
<div class="tb" style="left:653px">[SP500],H1</div><div class="sp" style="left:724px"></div>
<div class="tb" style="left:737px">[DJI30],M15</div><div class="sp" style="left:813px"></div>
<div class="tb" style="left:825px">[NQ100],M15</div><div class="sp" style="left:911px"></div>
<div class="tb" style="left:922px">GOLD,H1</div><div class="sp" style="left:986px"></div>
<div class="tb" style="left:999px">SILVER,H1</div><div class="sp" style="left:1067px"></div>
<div class="tb" style="left:1078px">_CrudeOilUK_G0,H1</div>
<div class="tb" style="left:1211px;color:#222">#USDX_H0,H1</div>
<div class="tb" style="left:1312px">EURUSD,M15</div><div class="sp" style="left:1398px"></div>
<div class="tb" style="left:1411px">GBPUSD,M15</div><div class="sp" style="left:1496px"></div>
<div class="tb" style="left:1508px;width:56px;overflow:hidden">USDJPY,H1</div>
</body></html>
